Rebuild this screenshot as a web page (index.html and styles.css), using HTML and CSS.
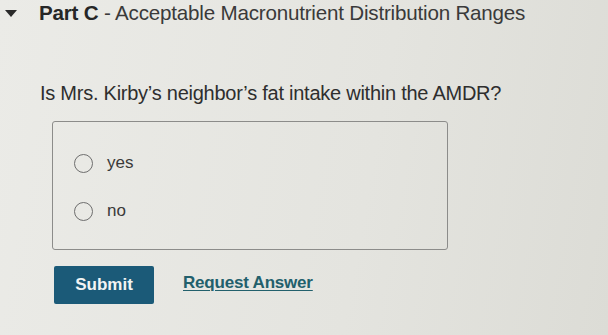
FILE: index.html
```html
<!DOCTYPE html>
<html>
<head>
<meta charset="utf-8">
<link rel="stylesheet" href="styles.css">
</head>
<body>
<div class="page">
  <div class="header">
    <span class="caret"></span>
    <h2 class="title"><b>Part C</b> - Acceptable Macronutrient Distribution Ranges</h2>
  </div>
  <p class="question">Is Mrs. Kirby’s neighbor’s fat intake within the AMDR?</p>
  <div class="choices">
    <label class="choice"><span class="radio"></span><span class="label">yes</span></label>
    <label class="choice"><span class="radio"></span><span class="label">no</span></label>
  </div>
  <div class="actions">
    <button class="submit">Submit</button>
    <a class="request" href="#">Request Answer</a>
  </div>
</div>
</body>
</html>
```
FILE: styles.css
```css
html, body {
  margin: 0;
  padding: 0;
}
body {
  width: 608px;
  height: 335px;
  overflow: hidden;
  background: linear-gradient(100deg, #ebebe7 0%, #e4e4df 60%, #dcdcd6 100%);
  font-family: "Liberation Sans", Arial, sans-serif;
  color: #333;
}
.header {
  display: flex;
  align-items: center;
  height: 30px;
}
.caret {
  width: 0;
  height: 0;
  border-left: 6px solid transparent;
  border-right: 6px solid transparent;
  border-top: 7px solid #2a2a2a;
  margin-left: 5px;
  margin-right: 22px;
  margin-top: -3px;
}
.title {
  margin: -4px 0 0 0;
  font-size: 20.6px;
  font-weight: normal;
  color: #3a3a3a;
  letter-spacing: -0.2px;
  line-height: 30px;
}
.title b {
  color: #262626;
}
.question {
  margin: 51px 0 0 40px;
  font-size: 20px;
  line-height: 24px;
  color: #2e2e2e;
  letter-spacing: -0.25px;
}
.choices {
  margin: 16px 0 0 52px;
  width: 396px;
  height: 129px;
  border: 1px solid #8c8c8a;
  border-radius: 3px;
  box-sizing: border-box;
  display: flex;
  flex-direction: column;
  padding: 31px 0 0 21px;
  gap: 28px;
}
.choice {
  display: flex;
  align-items: center;
  height: 20px;
}
.radio {
  width: 17px;
  height: 17px;
  border: 1.5px solid #6e6e6e;
  border-radius: 50%;
  margin-right: 14px;
}
.label {
  font-size: 17px;
  color: #3a3a3a;
}
.actions {
  display: flex;
  align-items: center;
  margin: 16px 0 0 54px;
  gap: 29px;
}
.submit {
  width: 100px;
  height: 38px;
  background: #1b5a78;
  border: none;
  border-radius: 2px;
  color: #f2f4f4;
  font-family: "Liberation Sans", Arial, sans-serif;
  font-weight: bold;
  font-size: 17px;
  padding: 0;
}
.request {
  color: #22606c;
  font-size: 17px;
  font-weight: bold;
  text-decoration: underline;
  text-underline-offset: 2px;
  letter-spacing: -0.2px;
  margin-top: -4px;
}
```
